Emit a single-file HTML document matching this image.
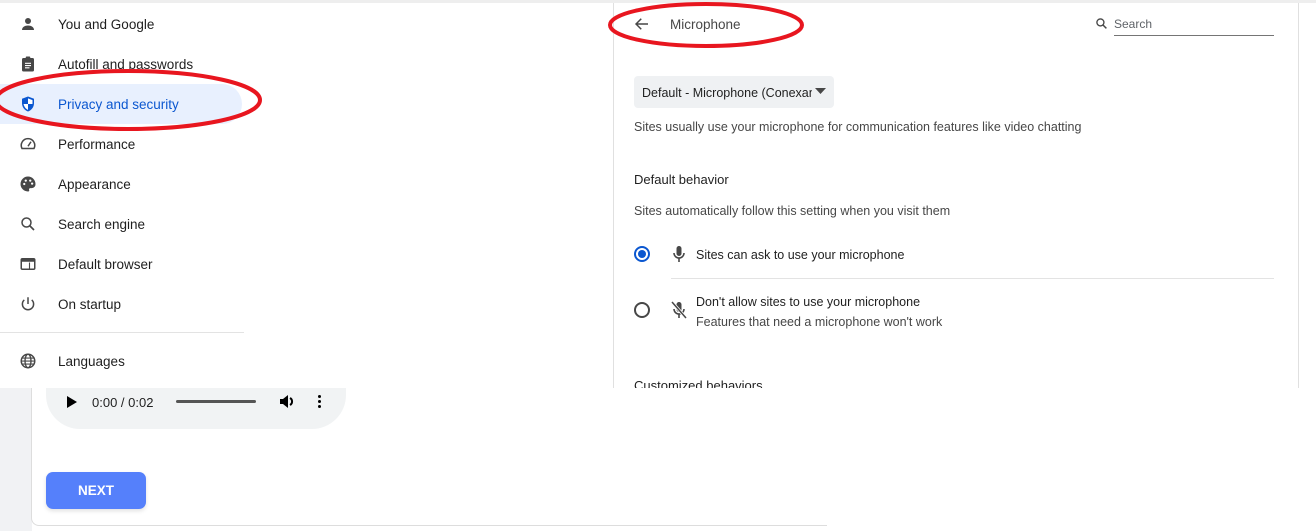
<!DOCTYPE html><html><head><style>
*{margin:0;padding:0;box-sizing:border-box}
body{width:1316px;height:531px;position:relative;overflow:hidden;background:#fff;font-family:"Liberation Sans",sans-serif;color:#1f1f1f}
.a{position:absolute}
.nav{left:58px;font-size:13.5px;color:#1f1f1f}
.ic{left:19px;width:18px;height:18px}
.t{font-size:12.5px;color:#474747}
</style></head><body>
<div class="a" style="left:0;top:388px;width:32px;height:143px;background:#f1f2f4"></div>
<div class="a" style="left:31px;top:360px;width:796px;height:166px;border-left:1px solid #ddd;border-bottom:1px solid #ddd;border-bottom-left-radius:8px;background:#fff"></div>
<div class="a" style="left:46px;top:360px;width:300px;height:69px;background:#f1f3f4;border-radius:0 0 34px 34px"></div>
<svg class="a" style="left:66px;top:395px" width="12" height="14"><path d="M1 1L11 7L1 13Z" fill="#000"/></svg>
<div class="a" style="left:92px;top:395px;font-size:13px;color:#222">0:00 / 0:02</div>
<div class="a" style="left:176px;top:400px;width:80px;height:3px;background:#555;border-radius:2px"></div>
<svg class="a" style="left:279px;top:393px" width="18" height="17"><path d="M1 6h3l5-4v13l-5-4H1Z" fill="#000"/><path d="M11 5a4 4 0 0 1 0 7" stroke="#000" stroke-width="2" fill="none"/></svg>
<div class="a" style="left:318px;top:395px;width:3px;height:3px;background:#000;border-radius:2px;box-shadow:0 5px 0 #000,0 10px 0 #000"></div>
<div class="a" style="left:46px;top:472px;width:100px;height:37px;background:#5580fb;border-radius:7px;color:#fff;font-weight:bold;font-size:13.5px;text-align:center;line-height:38px;box-shadow:0 2px 4px rgba(0,0,0,.12)">NEXT</div>

<div class="a" style="left:0;top:0;width:1316px;height:388px;background:#fff"></div>
<div class="a" style="left:0;top:0;width:1316px;height:3px;background:#eee"></div>
<div class="a" style="left:0;top:84px;width:242px;height:40px;background:#e8f0fe;border-radius:0 20px 20px 0"></div>
<div class="a" style="left:0;top:332px;width:244px;height:1px;background:#e3e3e3"></div>

<svg class="a ic" style="top:15px" viewBox="0 0 24 24"><circle cx="12" cy="8" r="4" fill="#474747"/><path d="M4 20c0-4 4-6 8-6s8 2 8 6Z" fill="#474747"/></svg>
<div class="a nav" style="top:17px">You and Google</div>
<svg class="a ic" style="top:55px" viewBox="0 0 24 24"><rect x="4" y="4" width="16" height="18" rx="2" fill="#474747"/><rect x="9" y="2" width="6" height="4" rx="1" fill="#474747"/><path d="M8 11h8M8 14h8M8 17h6" stroke="#fff" stroke-width="1.5"/></svg>
<div class="a nav" style="top:57px">Autofill and passwords</div>
<svg class="a ic" style="top:95px" viewBox="0 0 24 24"><path d="M12 2L4 5v6c0 5 3.5 9.5 8 11 4.5-1.5 8-6 8-11V5Z" fill="#0b57d0"/><path d="M12 12V4.5L18 6.8V11c0 .4 0 .7-.1 1ZM12 12H6.1c.6 3.6 3 6.6 5.9 7.8Z" fill="#fff"/></svg>
<div class="a nav" style="top:97px;color:#0b57d0">Privacy and security</div>
<svg class="a ic" style="top:135px" viewBox="0 0 24 24"><path d="M4 18a9 9 0 1 1 16 0Z" fill="none" stroke="#474747" stroke-width="2"/><path d="M12 15l4-6" stroke="#474747" stroke-width="2"/></svg>
<div class="a nav" style="top:137px">Performance</div>
<svg class="a ic" style="top:175px" viewBox="0 0 24 24"><path d="M12 2a10 10 0 0 0 0 20c1.5 0 2-1 1.5-2s0-2.5 1.5-2.5h2A5 5 0 0 0 22 12C22 6.5 17.5 2 12 2Z" fill="#474747"/><circle cx="7" cy="12" r="1.5" fill="#fff"/><circle cx="9" cy="7.5" r="1.5" fill="#fff"/><circle cx="15" cy="7.5" r="1.5" fill="#fff"/><circle cx="17.5" cy="11.5" r="1.5" fill="#fff"/></svg>
<div class="a nav" style="top:177px">Appearance</div>
<svg class="a ic" style="top:215px" viewBox="0 0 24 24"><circle cx="10" cy="10" r="6" fill="none" stroke="#474747" stroke-width="2"/><path d="M14.5 14.5L20 20" stroke="#474747" stroke-width="2.2"/></svg>
<div class="a nav" style="top:217px">Search engine</div>
<svg class="a ic" style="top:255px" viewBox="0 0 24 24"><rect x="3" y="5" width="18" height="14" rx="1.5" fill="none" stroke="#474747" stroke-width="2"/><rect x="3" y="5" width="18" height="4" fill="#474747"/><path d="M14 10v8" stroke="#474747" stroke-width="1.5"/></svg>
<div class="a nav" style="top:257px">Default browser</div>
<svg class="a ic" style="top:295px" viewBox="0 0 24 24"><path d="M7 6.5a7.5 7.5 0 1 0 10 0" fill="none" stroke="#474747" stroke-width="2"/><path d="M12 3v9" stroke="#474747" stroke-width="2"/></svg>
<div class="a nav" style="top:297px">On startup</div>
<svg class="a ic" style="top:352px" viewBox="0 0 24 24"><circle cx="12" cy="12" r="9" fill="none" stroke="#474747" stroke-width="2"/><ellipse cx="12" cy="12" rx="4" ry="9" fill="none" stroke="#474747" stroke-width="1.8"/><path d="M3 12h18M4.5 8h15M4.5 16h15" stroke="#474747" stroke-width="1.5"/></svg>
<div class="a nav" style="top:354px">Languages</div>

<div class="a" style="left:613px;top:3px;width:686px;height:385px;border-left:1px solid #e0e0e0;border-right:1px solid #e0e0e0"></div>
<svg class="a" style="left:633px;top:15px" width="18" height="18" viewBox="0 0 24 24"><path d="M20 12H5M11 5l-7 7 7 7" fill="none" stroke="#474747" stroke-width="2"/></svg>
<div class="a" style="left:670px;top:17px;font-size:13.5px;color:#474747">Microphone</div>
<svg class="a" style="left:1095px;top:17px" width="13" height="13" viewBox="0 0 24 24"><circle cx="10" cy="10" r="6.5" fill="none" stroke="#474747" stroke-width="2.5"/><path d="M15 15l6 6" stroke="#474747" stroke-width="2.8"/></svg>
<div class="a t" style="left:1114px;top:17px;font-size:12px;color:#5f6368">Search</div>
<div class="a" style="left:1114px;top:35px;width:160px;height:1px;background:#757575"></div>
<div class="a" style="left:634px;top:76px;width:200px;height:32px;background:#eff1f3;border-radius:4px"></div>
<div class="a" style="left:642px;top:86px;font-size:12.5px;color:#1f1f1f;width:170px;overflow:hidden;white-space:nowrap">Default - Microphone (Conexant</div>
<svg class="a" style="left:815px;top:88px" width="11" height="7"><path d="M0 0h11L5.5 6Z" fill="#474747"/></svg>
<div class="a t" style="left:634px;top:120px">Sites usually use your microphone for communication features like video chatting</div>
<div class="a" style="left:634px;top:172px;font-size:13px;color:#1f1f1f">Default behavior</div>
<div class="a t" style="left:634px;top:204px">Sites automatically follow this setting when you visit them</div>
<div class="a" style="left:634px;top:246px;width:16px;height:16px;border:2px solid #0b57d0;border-radius:50%"></div>
<div class="a" style="left:638px;top:250px;width:8px;height:8px;background:#0b57d0;border-radius:50%"></div>
<svg class="a" style="left:671px;top:245px" width="16" height="18" viewBox="0 0 16 18"><rect x="5.5" y="1" width="5" height="10" rx="2.5" fill="#474747"/><path d="M3 8a5 5 0 0 0 10 0M8 13v4" stroke="#474747" stroke-width="1.6" fill="none"/></svg>
<div class="a" style="left:696px;top:248px;font-size:12.5px;color:#1f1f1f">Sites can ask to use your microphone</div>
<div class="a" style="left:671px;top:278px;width:603px;height:1px;background:#e3e3e3"></div>
<div class="a" style="left:634px;top:302px;width:16px;height:16px;border:2px solid #474747;border-radius:50%"></div>
<svg class="a" style="left:671px;top:301px" width="16" height="18" viewBox="0 0 16 18"><rect x="5.5" y="1" width="5" height="10" rx="2.5" fill="#474747"/><path d="M3 8a5 5 0 0 0 10 0M8 13v4" stroke="#474747" stroke-width="1.6" fill="none"/><path d="M1 1l14 16" stroke="#fff" stroke-width="3"/><path d="M1 1l14 16" stroke="#474747" stroke-width="1.5"/></svg>
<div class="a" style="left:696px;top:295px;font-size:12.5px;color:#1f1f1f">Don't allow sites to use your microphone</div>
<div class="a t" style="left:696px;top:315px">Features that need a microphone won't work</div>
<div class="a" style="left:634px;top:378px;font-size:13px;color:#1f1f1f;height:10px;overflow:hidden;line-height:15px">Customized behaviors</div>

<svg class="a" style="left:0;top:0" width="1316" height="531">
<ellipse cx="128" cy="100" rx="132" ry="29" fill="none" stroke="#e8161f" stroke-width="4"/>
<ellipse cx="706" cy="25" rx="96" ry="21" fill="none" stroke="#e8161f" stroke-width="4"/>
</svg>
</body></html>
